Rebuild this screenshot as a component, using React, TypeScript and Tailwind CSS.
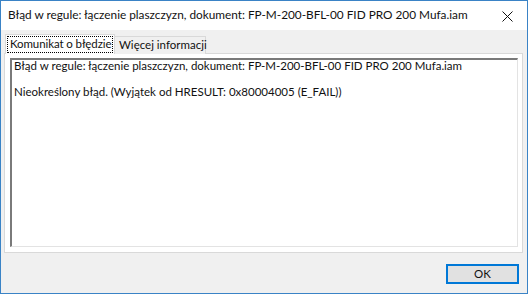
export default function App() {
  const font = { fontFamily: 'Lato, "Noto Sans", sans-serif' }
  return (
    <div
      className="w-[528px] h-[294px] border border-[#3a83c6] bg-[#f0f0f0] flex flex-col text-[11.5px] text-[#111] whitespace-nowrap"
      style={font}
    >
      {/* pasek tytułu */}
      <div className="h-[29px] bg-white flex items-center justify-between pl-[7px] pr-[14px] shrink-0">
        <span className="text-[11.8px] leading-none -mt-[1px]">
          Błąd w regule: łączenie plaszczyzn, dokument: FP-M-200-BFL-00 FID PRO 200 Mufa.iam
        </span>
        <svg width="11" height="11" viewBox="0 0 11 11" className="mt-[1px]">
          <path d="M0.5 0.5 L10.5 10.5 M10.5 0.5 L0.5 10.5" stroke="#111" strokeWidth="1" />
        </svg>
      </div>

      {/* zakładki */}
      <div className="pt-[4px] pl-[3px] pr-[4px] flex flex-col">
        <div className="flex items-end relative z-10 -mb-px pl-px">
          <div className="h-[20px] w-[110px] bg-white border border-b-0 border-[#d9d9d9] p-[1px]">
            <div className="h-full border border-dotted border-black flex items-center pl-[2px] pb-[1px] leading-none tracking-[-0.1px]">
              Komunikat o błędzie
            </div>
          </div>
          <div className="h-[18px] w-[91px] bg-[#f0f0f0] border border-l-0 border-b-0 border-[#d9d9d9] flex items-center pl-[4px] pb-[1px] leading-none">
            Więcej informacji
          </div>
        </div>
        <div className="h-[200px] bg-white border border-[#d9d9d9] p-[4px]">
          <div className="h-[189px] ml-px border-t-2 border-l-2 border-t-[#7a7a7a] border-l-[#7a7a7a] border-r border-b border-r-[#e3e3e3] border-b-[#e3e3e3] px-[2px] leading-[13px]">
            <div className="-mt-[1px]">Błąd w regule: łączenie plaszczyzn, dokument: FP-M-200-BFL-00 FID PRO 200 Mufa.iam</div>
            <div className="h-[13px]" />
            <div>Nieokreślony błąd. (Wyjątek od HRESULT: 0x80004005 (E_FAIL))</div>
          </div>
        </div>
      </div>

      {/* przyciski */}
      <div className="flex justify-end pr-[8px] pt-[11px]">
        <button className="w-[73px] h-[20px] bg-[#e1e1e1] border-2 border-[#0078d7] flex items-center justify-center leading-none pb-[1px]">
          OK
        </button>
      </div>
    </div>
  )
}
